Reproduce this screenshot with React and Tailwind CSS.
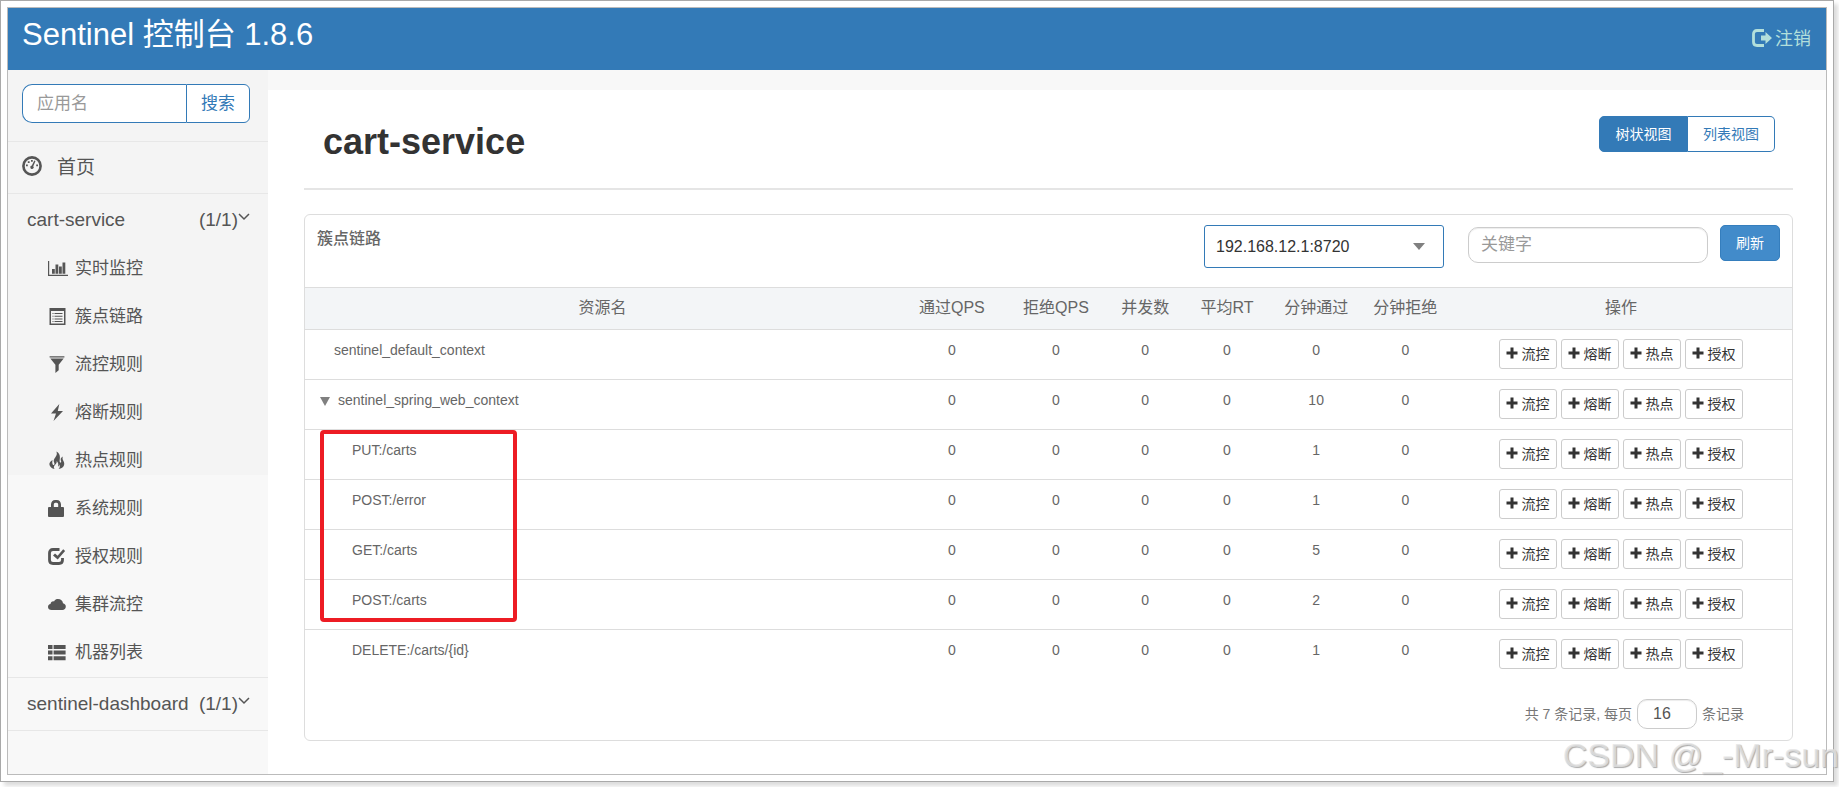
import React, { useState } from 'react';

// --- Data ---
const MENU = [
  { label: '实时监控', icon: 'stats' },
  { label: '簇点链路', icon: 'listAlt' },
  { label: '流控规则', icon: 'filter' },
  { label: '熔断规则', icon: 'flash' },
  { label: '热点规则', icon: 'fire' },
  { label: '系统规则', icon: 'lock' },
  { label: '授权规则', icon: 'check' },
  { label: '集群流控', icon: 'cloud' },
  { label: '机器列表', icon: 'thList' },
];

const COLUMNS = ['资源名', '通过QPS', '拒绝QPS', '并发数', '平均RT', '分钟通过', '分钟拒绝', '操作'];

const RESOURCES = [
  { name: 'sentinel_default_context', indent: 'pl-[29px]', values: [0, 0, 0, 0, 0, 0] },
  { name: 'sentinel_spring_web_context', indent: 'pl-[15px]', open: true, values: [0, 0, 0, 0, 10, 0] },
  { name: 'PUT:/carts', indent: 'pl-[47px]', values: [0, 0, 0, 0, 1, 0] },
  { name: 'POST:/error', indent: 'pl-[47px]', values: [0, 0, 0, 0, 1, 0] },
  { name: 'GET:/carts', indent: 'pl-[47px]', values: [0, 0, 0, 0, 5, 0] },
  { name: 'POST:/carts', indent: 'pl-[47px]', values: [0, 0, 0, 0, 2, 0] },
  { name: 'DELETE:/carts/{id}', indent: 'pl-[47px]', values: [0, 0, 0, 0, 1, 0] },
];

const ACTIONS = ['流控', '熔断', '热点', '授权'];

// --- Icons ---
const ICONS = {
  stats: (
    <path d="M0 2h1.2v13.8H20V17H0zM4 10h2.800v4.800H4zM7.500 5.500h2.800v9.300H7.500zM11 7.500h2.800v7.300H11zM14.500 3.500h2.800v11.300h-2.800z" />
  ),
  listAlt: (
    <path
      fillRule="evenodd"
      d="M1.500 1h16v17h-16zM3 4v12.600h13V4zM4.500 6h1v1h-1zM6.500 6h8v1h-8zM4.500 8.700h1v1h-1zM6.500 8.700h8v1h-8zM4.500 11.400h1v1h-1zM6.500 11.400h8v1h-8zM4.500 14.100h1v1h-1zM6.500 14.100h8v1h-8z"
    />
  ),
  filter: <path d="M1.600 1.200h14.800v1.200H1.600zM2.300 3.400h13.400l-5 6.400v5.400L7.400 18V9.800z" />,
  flash: <path d="M11.300 1L3 10.400h5L5.500 18 15 8h-5.200z" />,
  fire: (
    <path d="M8.400.6c1 2.400.2 4-1.200 5.800-1.300 1.700-2 3.200-1 5.300.5 1.100.3 2.100-.4 2.300-1.400.3-1.900-2.600-1.200-5C2.300 10.200 1 12 1.500 14c.5 1.900 2.300 3.500 5 4-1-1.500-.7-3 .6-4.200 1.200-1.100 1.900-2 1.600-3.700 1.500 1.400 2 3.500 1.300 5.300.9-.2 1.300-1 1.300-2 .9 1.800.5 3.400-.8 4.600 4-.7 6-2.800 5.700-5.800-.2-1.700-1.300-2.800-1.600-4.200-.2-.9 0-1.800.3-2.600-2.400 1-2.600 3-1.800 4.900.3.900-.2 1.500-.8 1.300-1.200-.5-.5-3-.4-4.900C12.100 4.200 10.800 1.800 8.400.6z" />
  ),
  lock: (
    <path
      fillRule="evenodd"
      d="M3 9V5.600C3 2.700 4.700 1 7.200 1h1.600C11.300 1 13 2.700 13 5.600V8h2q1 0 1 1v8q0 1-1 1H1q-1 0-1-1V9q0-1 1-1h2zM5.800 8h4.400V5.800c0-1.300-.6-2-1.600-2H7.400c-1 0-1.600.7-1.600 2z"
    />
  ),
  check: (
    <>
      <path d="M11.500 2.500H5Q1.500 2.500 1.500 6v7Q1.500 16.500 5 16.500h6Q14.500 16.500 14.500 13v-2" fill="none" stroke="currentColor" strokeWidth="2.800" />
      <path d="M5 8.400l2-2 2.600 2.400 5.600-6.500 1.900 1.700-7.400 8.600z" />
    </>
  ),
  cloud: <path d="M3.600 15C1.500 15 0 13.700 0 12c0-1.500 1-2.600 2.500-2.900C2.600 7.300 4.200 6 6 6.400 6.900 4.600 8.500 4 10 4c2.800 0 4.800 1.900 5 4.300 1.700.3 2.800 1.600 2.800 3.300 0 2-1.500 3.400-3.400 3.400z" />,
  thList: <path d="M0 2h4.500v4H0zM5.600 2h12v4h-12zM0 7.600h4.500v4H0zM5.600 7.600h12v4h-12zM0 13.200h4.500v4H0zM5.600 13.200h12v4h-12z" />,
};

const MenuIcon = ({ name }) => (
  <svg viewBox="0 0 20 19" width="20" height="19" fill="currentColor" className="mb-0.5" aria-hidden="true">
    {ICONS[name]}
  </svg>
);

const DashboardIcon = () => (
  <svg viewBox="0 0 20 20" width="20" height="20" fill="currentColor" className="mb-1" aria-hidden="true">
    <circle cx="10" cy="10" r="8.600" fill="none" stroke="currentColor" strokeWidth="2.600" />
    <path d="M12.300 4.500l1.200.5-2.200 5.200a1.700 1.700 0 1 1-1.500-.6zM4 8.500h1.800v1.800H4zM5.800 5.300h1.800v1.800H5.800zM9 4h1.800v1.800H9zM14.200 8.500H16v1.800h-1.800z" />
  </svg>
);

const LogoutIcon = () => (
  <svg viewBox="0 0 20 18" width="20" height="18" fill="currentColor" className="mb-0.5" aria-hidden="true">
    <path d="M12 1.500H5Q1.500 1.500 1.500 5v8Q1.500 16.500 5 16.500h7" fill="none" stroke="currentColor" strokeWidth="2.800" />
    <path d="M9 6.500h4.500V3L20 9l-6.500 6v-3.500H9z" />
  </svg>
);

const PlusIcon = () => (
  <svg viewBox="0 0 12 12" width="12" height="12" fill="currentColor" className="mb-px" aria-hidden="true">
    <path d="M4.500.5h3v4h4v3h-4v4h-3v-4h-4v-3h4z" />
  </svg>
);

const AppRow = ({ name }) => (
  <a href="#" className="flex h-[52px] items-center justify-between pl-[19px] pr-[18px] text-[19px]">
    <span>{name}</span>
    <span className="flex items-center">
      (1/1)
      <svg viewBox="0 0 12 20" width="12" height="20" fill="none" stroke="currentColor" strokeWidth="1.500" className="mb-0.5" aria-hidden="true">
        <path d="M1 5l5 5 5-5" />
      </svg>
    </span>
  </a>
);

export default function App() {
  const [appName, setAppName] = useState('');
  const [keyword, setKeyword] = useState('');
  const [pageSize, setPageSize] = useState('16');
  const [treeView, setTreeView] = useState(true);

  return (
    <div className="relative overflow-hidden bg-white pr-[5px] pb-[5px] font-['Liberation_Sans','Noto_Sans_CJK_SC',sans-serif] text-[#555]">
      <div className="border border-[#a9a9a9] p-1.5 shadow-[4px_4px_4px_#ddd]">
        <div className="border border-[#bbb]">
          {/* Header */}
          <header className="flex h-[62px] items-center justify-between bg-[#337ab7] pl-3.5 pr-[15px] text-white">
            <h1 className="pb-2 text-[31px] leading-10">Sentinel 控制台 1.8.6</h1>
            <a href="#" className="flex items-center gap-[3px] text-[18px] text-[#b2dfdb]">
              <LogoutIcon />
              注销
            </a>
          </header>

          <div className="flex">
            {/* Sidebar */}
            <nav className="w-[260px] shrink-0 bg-[linear-gradient(#f4f4f4_405px,#f8f8f8_405px)]">
              <form className="flex h-[72px] items-start border-b border-[#e7e7e7] px-3.5 pt-3.5" onSubmit={e => e.preventDefault()}>
                <input
                  type="text"
                  aria-label="应用名"
                  placeholder="应用名"
                  value={appName}
                  onChange={e => setAppName(e.target.value)}
                  className="h-[39px] w-[164px] rounded-l-[10px] border border-r-0 border-[#337ab7] bg-white px-3.5 text-[17px] outline-none placeholder:text-[#999]"
                />
                <button className="h-[39px] w-16 rounded-r-md border border-[#337ab7] bg-white text-[17px] text-[#337ab7]">搜索</button>
              </form>

              <a href="#" className="flex h-[52px] items-center gap-[15px] border-b border-[#e7e7e7] pl-3.5 text-[19px]">
                <DashboardIcon />
                <span className="pt-0.5">首页</span>
              </a>

              <div className="border-b border-[#e7e7e7]">
                <AppRow name="cart-service" />
                <ul className="-mt-px">
                  {MENU.map(item => (
                    <li key={item.label}>
                      <a href="#" className="flex h-12 items-center gap-[7px] pl-10 text-[17px]">
                        <MenuIcon name={item.icon} />
                        {item.label}
                      </a>
                    </li>
                  ))}
                </ul>
              </div>
              <div className="border-b border-[#e7e7e7]">
                <AppRow name="sentinel-dashboard" />
              </div>
            </nav>

            {/* Main */}
            <main className="min-w-0 flex-1 border-t-[20px] border-[#f8f8f8] pb-[33px] pl-9 pr-[33px]">
              <div className="flex h-[100px] items-start justify-between border-b-2 border-[#e5e5e5] pl-[19px] pr-[18px] pt-[26px]">
                <h2 className="text-[36px] font-bold leading-[52px] text-[#333]">cart-service</h2>
                <div className="flex text-sm">
                  <button
                    onClick={() => setTreeView(true)}
                    className={`h-9 w-[89px] rounded-l-[5px] border border-[#337ab7] ${treeView ? 'bg-[#337ab7] text-white' : 'bg-white text-[#337ab7]'}`}
                  >
                    树状视图
                  </button>
                  <button
                    onClick={() => setTreeView(false)}
                    className={`h-9 w-[87px] rounded-r-[5px] border border-l-0 border-[#337ab7] ${treeView ? 'bg-white text-[#337ab7]' : 'bg-[#337ab7] text-white'}`}
                  >
                    列表视图
                  </button>
                </div>
              </div>

              <section className="relative mt-6 rounded-md border border-[#ddd]">
                {/* Toolbar */}
                <div className="flex h-[72px] items-start px-3 pt-2.5">
                  <h3 className="mr-auto pt-0.5 text-base font-medium leading-6 text-[#666]">簇点链路</h3>
                  <div className="relative mr-6">
                    <select
                      aria-label="机器"
                      className="h-[43px] w-60 appearance-none rounded-[3px] border border-[#337ab7] bg-white px-[11px] text-base text-[#333] outline-none"
                    >
                      <option>192.168.12.1:8720</option>
                    </select>
                    <span className="pointer-events-none absolute right-[19px] top-[18px] border-x-[6px] border-t-[7px] border-x-transparent border-t-[#808080]" />
                  </div>
                  <input
                    type="text"
                    aria-label="关键字"
                    placeholder="关键字"
                    value={keyword}
                    onChange={e => setKeyword(e.target.value)}
                    className="mr-3 mt-0.5 h-9 w-60 rounded-[10px] border border-[#ccc] bg-white px-3 text-[17px] shadow-[inset_0_1px_1px_rgba(0,0,0,0.075)] outline-none placeholder:text-[#999]"
                  />
                  <button className="h-9 w-[60px] rounded-[5px] border border-[#357ebd] bg-[#428bca] text-sm text-white">刷新</button>
                </div>

                {/* Resources */}
                <table className="w-full table-fixed border-collapse text-sm text-[#666]">
                  <colgroup>
                    <col className="w-[40%]" />
                    <col className="w-[7%]" />
                    <col className="w-[7%]" />
                    <col className="w-[5%]" />
                    <col className="w-[6%]" />
                    <col className="w-[6%]" />
                    <col className="w-[6%]" />
                    <col className="w-[23%]" />
                  </colgroup>
                  <thead>
                    <tr className="h-[42px] border-y border-[#ddd] bg-[#f3f5f7]">
                      {COLUMNS.map(c => (
                        <th key={c} className="pb-0.5 text-base font-normal">{c}</th>
                      ))}
                    </tr>
                  </thead>
                  <tbody>
                    {RESOURCES.map(r => (
                      <tr key={r.name} className="h-[50px] border-b border-[#ddd] align-top last:border-b-0">
                        <td className={`${r.indent} pt-2.5`}>
                          <span className="flex items-center gap-2">
                            {r.open && <span className="mt-0.5 border-x-[5px] border-t-[9px] border-x-transparent border-t-[#808080]" />}
                            {r.name}
                          </span>
                        </td>
                        {r.values.map((v, i) => (
                          <td key={i} className="pt-2.5 text-center">{v}</td>
                        ))}
                        <td className="pt-[9px]">
                          <div className="flex justify-center gap-1">
                            {ACTIONS.map(a => (
                              <button key={a} className="flex h-[30px] w-[58px] items-center justify-center gap-[3px] rounded-[3px] border border-[#ccc] bg-white pb-px text-sm text-[#333]">
                                <PlusIcon />
                                {a}
                              </button>
                            ))}
                          </div>
                        </td>
                      </tr>
                    ))}
                  </tbody>
                </table>

                {/* Pager */}
                <div className="mb-[11px] mr-12 mt-[19px] flex items-center justify-end gap-[5px] text-sm text-[#777]">
                  <label htmlFor="page-size">共 7 条记录, 每页</label>
                  <input
                    id="page-size"
                    type="text"
                    value={pageSize}
                    onChange={e => setPageSize(e.target.value)}
                    className="h-[30px] w-[60px] rounded-[10px] border border-[#ccc] bg-white pl-[15px] text-base text-[#555] shadow-[inset_0_1px_1px_rgba(0,0,0,0.075)] outline-none"
                  />
                  <span>条记录</span>
                </div>

                {/* Highlight around the cart resources */}
                <div className="pointer-events-none absolute left-[15px] top-[215px] h-48 w-[197px] rounded-sm border-4 border-[#ed1c24]" />
              </section>
            </main>
          </div>
        </div>
      </div>

      <div className="pointer-events-none absolute bottom-3 right-0 text-[34px] leading-10 text-[#e4e4e4]/80 [text-shadow:1px_1px_1px_#aaa]">CSDN @_-Mr-sun</div>
    </div>
  );
}
